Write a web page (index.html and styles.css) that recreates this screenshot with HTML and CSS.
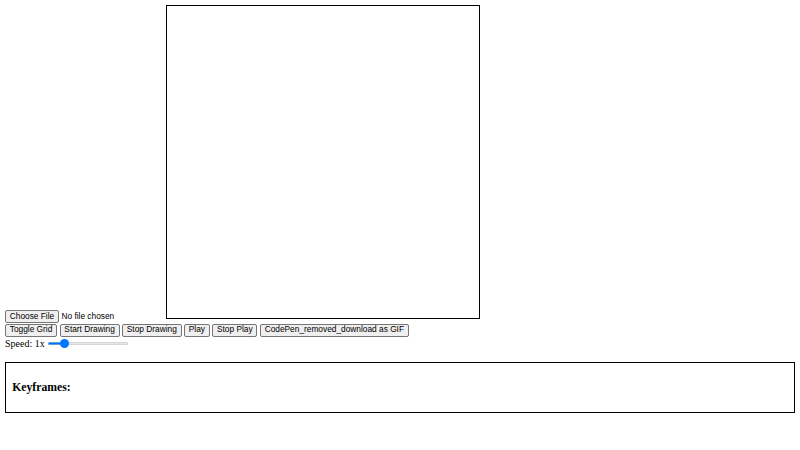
FILE: index.html
```html
<!DOCTYPE html>
<html>
<head>
<meta charset="utf-8">
<link rel="stylesheet" href="styles.css">
</head>
<body>
<input type="file" class="file-in">
<canvas class="board" width="500" height="500"></canvas>
<div class="controls">
<button class="btn">Toggle Grid</button>
<button class="btn">Start Drawing</button>
<button class="btn">Stop Drawing</button>
<button class="btn">Play</button>
<button class="btn">Stop Play</button>
<button class="btn">CodePen_removed_download as GIF</button>
</div>
<div class="speed">
<label>Speed: <span>1x</span></label>
<input type="range" min="0.25" max="5" step="0.05" value="1" class="slider" style="--p: 21%">
</div>
<div class="keyframes">
<h3 class="kf-title">Keyframes:</h3>
</div>
</body>
</html>
```

FILE: styles.css
```css
html {
  background: #fff;
}
body {
  margin: 5px;
  font-family: "Liberation Serif", serif;
  font-size: 10px;
  color: #000;
}
.file-in {
  font-family: "Liberation Sans", Arial, sans-serif;
  font-size: 8.333px;
  width: 158px;
  margin: 0;
  padding: 0;
}
.file-in::file-selector-button,
.btn {
  font-family: "Liberation Sans", Arial, sans-serif;
  font-size: 8.333px;
  line-height: 9.6px;
  padding: 0.8px 3.75px;
  margin: 0;
  border: 1px solid #767676;
  border-radius: 2px;
  background: #efefef;
  color: #000;
}
.file-in::file-selector-button {
  margin-right: 2.5px;
}
.board {
  border: 1px solid #000;
  width: 312px;
  height: 312px;
}
.speed {
  line-height: 11.5px;
}
.slider {
  -webkit-appearance: none;
  appearance: none;
  width: 80px;
  height: 10px;
  margin: 1.25px;
  vertical-align: -1px;
  background: transparent;
}
.slider::-webkit-slider-runnable-track {
  height: 3px;
  border-radius: 2px;
  background: linear-gradient(to right, #0075ff 0 var(--p), #e6e6e6 var(--p) 100%);
  box-shadow: inset 0 0 0 0.5px #c4c4c4;
}
.slider::-webkit-slider-thumb {
  -webkit-appearance: none;
  appearance: none;
  width: 9px;
  height: 9px;
  margin-top: -3px;
  border-radius: 50%;
  background: #0075ff;
  border: none;
}
.keyframes {
  margin-top: 12.5px;
  border: 1px solid #000;
  padding: 6.25px;
}
.kf-title {
  font-size: 11.7px;
  margin: 11.7px 0;
}
```
